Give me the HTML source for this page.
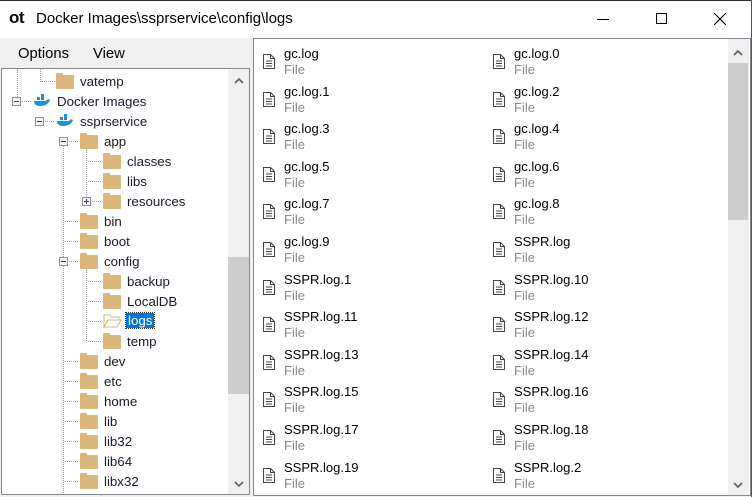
<!DOCTYPE html>
<html><head><meta charset="utf-8"><style>
*{margin:0;padding:0;box-sizing:border-box}
body{width:752px;height:497px;overflow:hidden;background:#f0f0f0;font-family:"Liberation Sans",sans-serif;position:relative;font-size:13.3px;color:#000}
.a{position:absolute}
.t{position:absolute;white-space:nowrap}
.fold{position:absolute;width:18px;height:14px;background:#dcb67a;border-radius:1px}
.fold:before{content:"";position:absolute;left:0;top:-2px;width:7px;height:3px;background:#dcb67a;border-radius:1px 1px 0 0}
.vl{position:absolute;border-left:1px dotted #a0a0a0;width:0}
.hl{position:absolute;border-top:1px dotted #a0a0a0;height:0}
.box{position:absolute;width:9px;height:9px;border:1px solid #919191;background:#f4f4f4}
.box i{position:absolute;left:1px;top:3px;width:5px;height:1px;background:#24448a}
.box b{position:absolute;left:3px;top:1px;width:1px;height:5px;background:#24448a}
.nm{position:absolute;font-size:13px;color:#000;white-space:nowrap}
.fl{position:absolute;font-size:13px;color:#8a8a8a}
</style></head><body>
<div class="a" style="left:0;top:0;width:752px;height:38px;background:#fff;border-top:1px solid #333"></div>
<div class="t" style="left:9px;top:8px;font-size:17px;font-weight:bold;letter-spacing:-0.5px">ot</div>
<div class="t" style="left:36px;top:10px;font-size:15px">Docker Images\ssprservice\config\logs</div>
<div class="a" style="left:597px;top:19px;width:12px;height:1px;background:#000"></div>
<div class="a" style="left:656px;top:13px;width:11px;height:11px;border:1px solid #000"></div>
<svg class="a" style="left:714px;top:13px" width="12" height="12"><path d="M0 0L12 12M12 0L0 12" stroke="#000" stroke-width="1.1"/></svg>
<div class="a" style="left:751px;top:0;width:1px;height:497px;background:#555"></div>
<div class="t" style="left:18px;top:46px;font-size:14.8px">Options</div>
<div class="t" style="left:93px;top:46px;font-size:14.8px">View</div>

<div class="a" style="left:1px;top:68px;width:249px;height:427px;background:#fff;border:1px solid #828790;overflow:hidden">
<div class="a" style="left:226px;top:0;width:21px;height:425px;background:#f0f0f0"></div>
<div class="a" style="left:226px;top:188px;width:21px;height:137px;background:#cdcdcd"></div>
<svg class="a" style="left:232px;top:9px" width="10" height="6"><path d="M1 5L5 1L9 5" stroke="#606060" stroke-width="1.6" fill="none"/></svg>
<svg class="a" style="left:232px;top:412px" width="10" height="6"><path d="M1 1L5 5L9 1" stroke="#606060" stroke-width="1.6" fill="none"/></svg>
</div>
<div class="a" style="left:2px;top:69px;width:226px;height:425px;overflow:hidden">
<div class="vl" style="left:15px;top:0;height:28px"></div>
<div class="vl" style="left:38px;top:0;height:13px"></div>
<div class="hl" style="left:39px;top:12px;width:14px"></div>
<div class="vl" style="left:61px;top:68px;height:360px"></div>
<div class="vl" style="left:84px;top:80px;height:52px"></div>
<div class="vl" style="left:84px;top:200px;height:72px"></div>
</div>
<div id="tree"></div>
<div class="a" style="left:253px;top:38px;width:498px;height:458px;background:#fff;border:1px solid #828790"></div>
<div class="a" style="left:728px;top:39px;width:21px;height:456px;background:#f0f0f0"></div>
<div class="a" style="left:728px;top:63px;width:20px;height:157px;background:#cdcdcd"></div>
<svg class="a" style="left:733px;top:50px" width="10" height="6"><path d="M1 5L5 1L9 5" stroke="#606060" stroke-width="1.6" fill="none"/></svg>
<svg class="a" style="left:733px;top:482px" width="10" height="6"><path d="M1 1L5 5L9 1" stroke="#606060" stroke-width="1.6" fill="none"/></svg>
<div id="files"></div>
<script>
var T=[[1,"vatemp","",0],[0,"Docker Images","-",1],[1,"ssprservice","-",1],[2,"app","-",0],[3,"classes","",0],[3,"libs","",0],[3,"resources","+",0],[2,"bin","",0],[2,"boot","",0],[2,"config","-",0],[3,"backup","",0],[3,"LocalDB","",0],[3,"logs","",2],[3,"temp","",0],[2,"dev","",0],[2,"etc","",0],[2,"home","",0],[2,"lib","",0],[2,"lib32","",0],[2,"lib64","",0],[2,"libx32","",0]];
var h="";
T.forEach(function(r,i){var cy=81+20*i,ix=Math.round(33+23.3*r[0]);
 if(i>0){h+='<div class="hl" style="left:'+(ix-15)+'px;top:'+cy+'px;width:13px"></div>';}
 if(r[2]){h+='<div class="box" style="left:'+(ix-21)+'px;top:'+(cy-4)+'px"><i></i>'+(r[2]=="+"?'<b></b>':'')+'</div>';}
 if(r[3]==1){h+='<svg class="a" style="left:'+ix+'px;top:'+(cy-7)+'px" width="17" height="13"><path d="M1 7h12c1-2 3-2 4-1c-1 3-4 6-10 6c-4 0-6-2-6-5z" fill="#1d8fe0"/><rect x="4" y="3" width="3" height="3" fill="#1d8fe0"/><rect x="8" y="0" width="3" height="6" fill="#1d8fe0"/></svg>';}
 else if(r[3]==2){h+='<svg class="a" style="left:'+ix+'px;top:'+(cy-8)+'px" width="19" height="16"><path d="M1 2h6l1 2h8v3H5L1 14z" fill="#fff" stroke="#dcb67a"/><path d="M1 14L5 7h13l-4 7z" fill="#fff" stroke="#dcb67a"/></svg>';}
 else h+='<div class="fold" style="left:'+ix+'px;top:'+(cy-6)+'px"></div>';
 if(r[3]==2)h+='<div class="t" style="left:'+(ix+23)+'px;top:'+(cy-8)+'px;background:#0078d7;color:#fff;padding:0 2px;outline:1px dotted #333">'+r[1]+'</div>';
 else h+='<div class="t" style="left:'+(ix+24)+'px;top:'+(cy-7)+'px;color:#1a1a2a">'+r[1]+'</div>';
});
document.getElementById("tree").innerHTML=h;
var L=["gc.log","gc.log.0","gc.log.1","gc.log.2","gc.log.3","gc.log.4","gc.log.5","gc.log.6","gc.log.7","gc.log.8","gc.log.9","SSPR.log","SSPR.log.1","SSPR.log.10","SSPR.log.11","SSPR.log.12","SSPR.log.13","SSPR.log.14","SSPR.log.15","SSPR.log.16","SSPR.log.17","SSPR.log.18","SSPR.log.19","SSPR.log.2"];
var f="";
L.forEach(function(n,i){var c=i%2,r=Math.floor(i/2),x=c?492:262,y=Math.round(46+37.6*r);
 f+='<svg class="a" style="left:'+x+'px;top:'+(y+7)+'px" width="14" height="17"><path d="M1.5 1.5h7l4 4v10h-11z" fill="#fff" stroke="#444"/><path d="M8.5 1.5v4h4M4 8h6M4 10.5h6M4 13h6" stroke="#444" fill="none"/></svg>';
 f+='<div class="nm" style="left:'+(x+22)+'px;top:'+y+'px">'+n+'</div><div class="fl" style="left:'+(x+22)+'px;top:'+(y+16)+'px">File</div>';
});
document.getElementById("files").innerHTML=f;
</script>
</body></html>
